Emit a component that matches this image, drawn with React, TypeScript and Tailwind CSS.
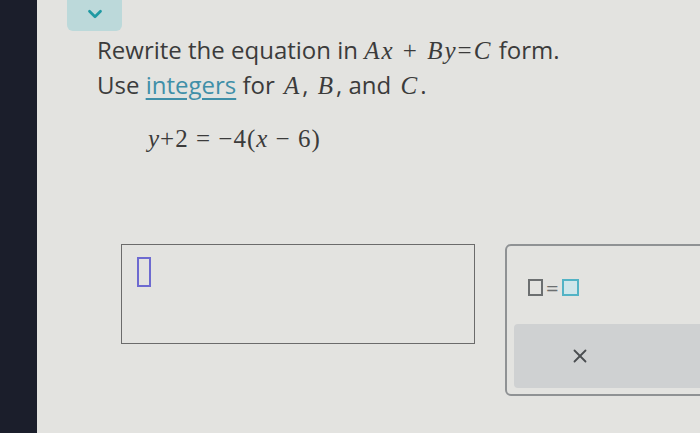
import { ChevronDown, X } from "lucide-react";

const serif = "font-['Liberation_Serif',serif] italic";
const mathOp = "font-['Liberation_Serif',serif]";
const letter = "font-['Liberation_Serif',serif] italic text-[25px] mx-[3px]";

export default function App() {
  return (
    <div className="flex h-[433px] w-[700px] overflow-hidden bg-[#e3e3e0] font-['Open_Sans',sans-serif] text-[#3b3b3b]">
      <div className="w-[37px] shrink-0 bg-[#1b1e2b]" />

      <main className="min-w-0 flex-1">
        <div className="ml-[30px] grid h-[31px] w-[55px] place-items-center rounded-b-md bg-[#bcd9da]">
          <ChevronDown className="-mt-1 text-[#1f9aa3]" size={22} strokeWidth={3} />
        </div>

        <section className="ml-[60px] mt-[1px] text-[24px] leading-[34px]">
          <p>
            Rewrite the equation in{" "}
            <span className="text-[25px] tracking-[2px]">
              <span className={serif}>Ax</span>
              <span className={mathOp}> + </span>
              <span className={serif}>By</span>
              <span className={mathOp}>=</span>
              <span className={serif}>C</span>
            </span>{" "}
            form.
          </p>
          <p>
            Use{" "}
            <span className="text-[#3f8fa8] underline decoration-[#3f8fa8] underline-offset-4">integers</span>{" "}
            for <span className={letter}>A</span>,{" "}
            <span className={letter}>B</span>, and{" "}
            <span className={letter}>C</span>.
          </p>
          <p className="ml-[51px] mt-[19px] font-['Liberation_Serif',serif] text-[25px] tracking-[1px]">
            <span className="italic">y</span>+2 = −4(<span className="italic">x</span> − 6)
          </p>
        </section>

        <div className="mt-[88px] flex items-start">
          <div className="ml-[84px] h-[100px] w-[354px] shrink-0 border border-[#6b6b6b] pl-[15px] pt-[12px]">
            <div className="h-[30px] w-[14px] border-2 border-[#6d6ad0]" />
          </div>

          <div className="ml-[30px] h-[152px] w-[260px] shrink-0 rounded-md border-2 border-[#8f9294] px-[7px] pt-[30px]">
            <div className="ml-[14px] flex items-center gap-[3px]">
              <div className="h-[17px] w-[15px] border-2 border-[#6c6f70]" />
              <span className="text-[22px] leading-none text-[#6c6f70]">=</span>
              <div className="h-[17px] w-[17px] border-2 border-[#52b3c5] bg-[#cfe6ea]" />
            </div>
            <div className="mt-[26px] flex h-[64px] items-center rounded-sm bg-[#cfd1d2] pl-[55px]">
              <X className="text-[#4a4d50]" size={22} strokeWidth={2} />
            </div>
          </div>
        </div>
      </main>
    </div>
  );
}
